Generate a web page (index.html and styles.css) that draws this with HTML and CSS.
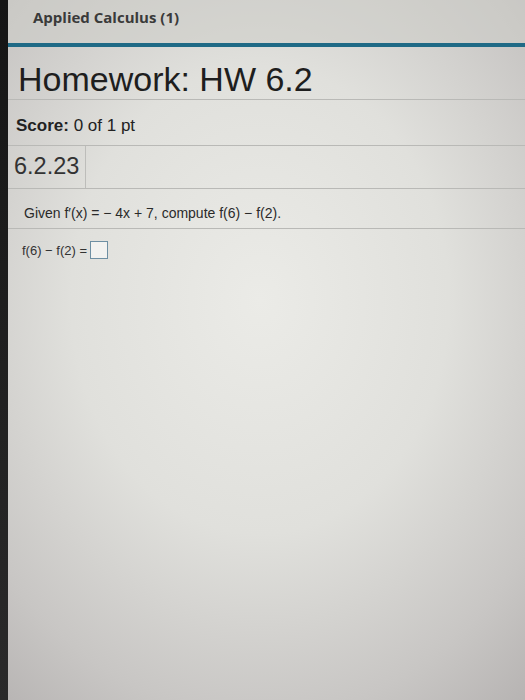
FILE: index.html
```html
<!DOCTYPE html>
<html>
<head>
<meta charset="utf-8">
<link rel="stylesheet" href="styles.css">
</head>
<body>
<div class="screen">
  <div class="bezel"></div>
  <div class="page">
    <div class="course">Applied Calculus (1)</div>
    <div class="bar"></div>
    <h1 class="title">Homework: HW 6.2</h1>
    <div class="score"><b>Score:</b> 0 of 1 pt</div>
    <div class="qrow"><div class="qid">6.2.23</div></div>
    <div class="qtext">Given f&#8242;(x) = &minus; 4x + 7, compute f(6) &minus; f(2).</div>
    <div class="answer">f(6) &minus; f(2) = <span class="box"></span></div>
    <div class="rest"></div>
  </div>
</div>
</body>
</html>
```
FILE: styles.css
```css
html, body { margin: 0; padding: 0; }
body {
  width: 525px;
  height: 700px;
  overflow: hidden;
  font-family: "Liberation Sans", Arial, sans-serif;
  color: #262626;
}
.screen {
  display: flex;
  height: 700px;
  background: radial-gradient(ellipse 420px 520px at 260px 300px, #ebebe7 0%, #e0e0dc 45%, #c8c6c4 80%, #b6b3b2 100%);
}
.bezel {
  width: 8px;
  flex: none;
  background: linear-gradient(#151515, #2a2a2a);
}
.page {
  flex: 1;
  display: flex;
  flex-direction: column;
}
.course {
  height: 43px;
  box-sizing: border-box;
  padding: 6px 0 0 25px;
  font-family: "Open Sans", sans-serif;
  font-weight: 700;
  font-size: 15px;
  line-height: 22px;
  color: #3a3a3a;
  background: rgba(205, 205, 201, 0.55);
}
.bar {
  height: 4px;
  background: #1f6a86;
}
.title {
  margin: 0;
  height: 53px;
  box-sizing: border-box;
  padding: 13px 0 0 10px;
  font-weight: 400;
  font-size: 34px;
  line-height: 38px;
  color: #1e1e1e;
  border-bottom: 1px solid #b9b9b6;
}
.score {
  height: 46px;
  box-sizing: border-box;
  padding: 16px 0 0 8px;
  font-size: 17px;
  line-height: 20px;
  color: #222;
  border-bottom: 1px solid #b9b9b6;
}
.qrow {
  height: 42px;
  display: flex;
  border-bottom: 1px solid #b9b9b6;
}
.qid {
  width: 78px;
  box-sizing: border-box;
  padding: 7px 0 0 6px;
  font-size: 23.5px;
  line-height: 26px;
  color: #333;
  border-right: 1px solid #bdbdba;
}
.qtext {
  height: 40px;
  box-sizing: border-box;
  padding: 16px 0 0 16px;
  font-size: 14px;
  line-height: 16px;
  color: #2a2a2a;
  border-bottom: 1px solid #b9b9b6;
}
.answer {
  display: flex;
  align-items: center;
  height: 42px;
  padding-left: 14px;
  font-size: 13px;
  color: #333;
}
.box {
  display: inline-block;
  width: 16px;
  height: 16px;
  margin-left: 3px;
  border: 1px solid #6e8fa3;
  background: #f2f2f0;
}
.rest { flex: 1; }
```
